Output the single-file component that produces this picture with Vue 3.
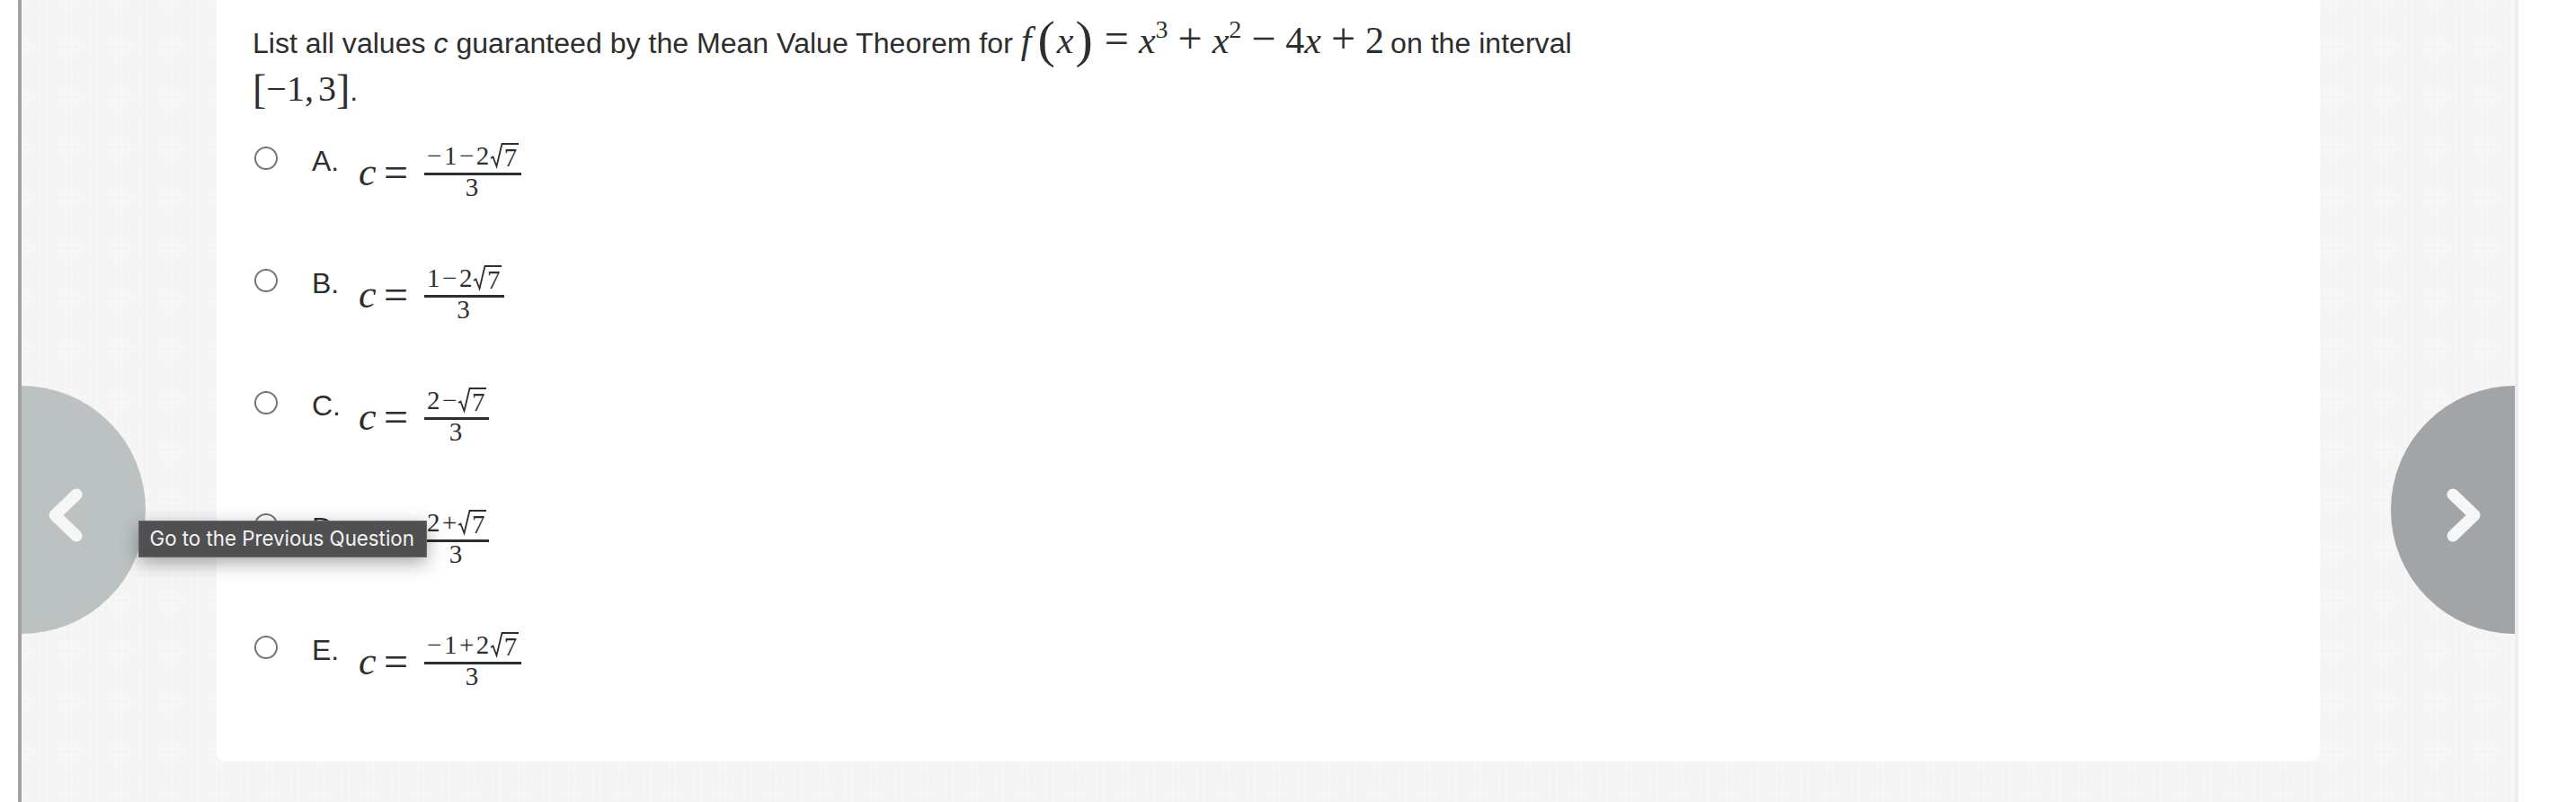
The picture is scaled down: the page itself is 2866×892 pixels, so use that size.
<script setup>
const options = [
  { letter: 'A', num: '−1−2' },
  { letter: 'B', num: '1−2' },
  { letter: 'C', num: '2−' },
  { letter: 'D', num: '2+' },
  { letter: 'E', num: '−1+2' },
];
</script>

<template>
  <div class="page">
    <div class="panel">
      <button class="nav nav-prev" aria-label="Previous">
        <svg class="chevron" viewBox="0 0 44 62"><polyline points="33,8 9,31 33,54" /></svg>
      </button>
      <div class="tooltip">Go to the Previous Question</div>

      <div class="card">
        <div class="question">
          <div class="line-one">
            <span>List all values <i>c</i> guaranteed by the Mean Value Theorem for</span>
            <span class="math eq">
              <i class="fn">f</i><span class="paren">(</span><i>x</i><span class="paren">)</span>
              <span class="op">=</span>
              <i>x</i><sup>3</sup>
              <span class="op">+</span>
              <i>x</i><sup>2</sup>
              <span class="op">−</span>
              <span>4</span><i>x</i>
              <span class="op">+</span>
              <span>2</span>
            </span>
            <span>on the interval</span>
          </div>
          <div class="line-two"><span class="math interval"><span class="bracket">[</span>−1,<span class="comma-gap">3</span><span class="bracket">]</span></span><span class="dot">.</span></div>
        </div>

        <div class="options">
          <div v-for="opt in options" :key="opt.letter" class="option">
            <span class="radio"></span>
            <span class="letter">{{ opt.letter }}.</span>
            <div class="math answer">
              <i class="var">c</i>
              <span class="equals">=</span>
              <div class="frac">
                <div class="num">
                  <span>{{ opt.num }}</span>
                  <svg class="radical" viewBox="0 0 14 28"><path d="M1 17 L3.5 15.5 L7.5 26 L13.5 1 H14" /></svg>
                  <span class="radicand">7</span>
                </div>
                <div class="den">3</div>
              </div>
            </div>
          </div>
        </div>
      </div>

      <button class="nav nav-next" aria-label="Next">
        <svg class="chevron" viewBox="0 0 44 62"><polyline points="11,8 35,31 11,54" /></svg>
      </button>
    </div>
  </div>
</template>

<style scoped>
.page {
  width: 2866px;
  height: 892px;
  overflow: hidden;
  background: #fff;
  padding-left: 20px;
  box-sizing: border-box;
  font-family: "Liberation Sans", Arial, sans-serif;
  color: #2e2e2e;
}

.panel {
  position: relative;
  width: 2782px;
  height: 892px;
  box-sizing: border-box;
  padding: 0 217px;
  border-left: 4px solid #a2a2a2;
  border-right: 4px solid #eeeeee;
  background-color: #f5f5f5;
  background-image:
    radial-gradient(circle, rgba(0, 0, 0, 0.008) 1px, transparent 2px),
    radial-gradient(circle, rgba(255, 255, 255, 0.25) 1px, transparent 2px);
  background-size: 7px 7px;
  background-position: 0 0, 3px 3px;
}

.card {
  height: 846px;
  background: #fff;
  border-radius: 0 0 8px 8px;
  padding: 18px 0 0 40px;
  box-sizing: border-box;
}

.question {
  font-size: 32.1px;
  height: 122px;
}

.line-one {
  display: flex;
  align-items: baseline;
  height: 54px;
  line-height: 54px;
  white-space: nowrap;
}

.line-two {
  height: 54px;
  line-height: 54px;
  white-space: nowrap;
}

.math {
  font-family: "Liberation Serif", "Times New Roman", serif;
}

.eq {
  font-size: 42px;
  margin: 0 7px 0 9px;
}

.eq sup {
  font-size: 28px;
  line-height: 0;
  vertical-align: 17px;
}

.fn {
  margin-right: 5px;
}

.paren {
  margin: 0 2px;
  font-size: 58px;
  font-weight: 200;
  line-height: 0;
  vertical-align: -4px;
}

.op {
  margin: 0 11px;
  font-size: 48px;
  line-height: 0;
}

.interval {
  font-size: 40px;
}

.bracket {
  font-size: 46px;
  line-height: 0;
  vertical-align: -3px;
}

.comma-gap {
  margin-left: 5px;
}

.dot {
  font-size: 32px;
}

.options {
  display: flex;
  flex-direction: column;
}

.option {
  display: flex;
  align-items: flex-start;
  height: 136px;
}

.radio {
  width: 26px;
  height: 26px;
  margin-top: 23px;
  margin-left: 2px;
  box-sizing: border-box;
  border: 2px solid #767676;
  border-radius: 50%;
  background: #fff;
}

.letter {
  width: 52px;
  margin-left: 38px;
  margin-top: 19px;
  font-size: 32px;
  line-height: 40px;
}

.answer {
  display: flex;
  align-items: center;
  margin-top: 20px;
  font-size: 44px;
}

.var {
  width: 28px;
  margin-top: 2px;
}

.equals {
  margin-top: 2px;
  margin-right: 18px;
  font-size: 48px;
  line-height: 44px;
}

.frac {
  display: flex;
  flex-direction: column;
  align-items: center;
  font-size: 29px;
  letter-spacing: 2.5px;
}

.num {
  display: flex;
  align-items: flex-end;
  height: 35px;
  padding: 0 3px 5px;
  border-bottom: 3px solid #2e2e2e;
  line-height: 28px;
  box-sizing: border-box;
}

.radical {
  width: 14px;
  height: 28px;
  margin-left: -2px;
  overflow: visible;
  fill: none;
  stroke: #2e2e2e;
  stroke-width: 1.8;
}

.radicand {
  height: 28px;
  line-height: 29px;
  border-top: 2px solid #2e2e2e;
  box-sizing: border-box;
  letter-spacing: 0;
  padding: 0 2px;
}

.den {
  line-height: 26px;
}

.nav {
  position: absolute;
  top: 429px;
  width: 138px;
  height: 276px;
  padding: 0;
  border: none;
  display: flex;
  align-items: center;
}

.nav-prev {
  left: 0;
  background: rgba(150, 160, 160, 0.6);
  border-radius: 0 138px 138px 0;
  padding-left: 28px;
}

.nav-next {
  right: 0;
  background: rgba(130, 135, 137, 0.72);
  border-radius: 138px 0 0 138px;
  padding-left: 58px;
}

.chevron {
  width: 44px;
  height: 62px;
  margin-top: 11px;
  fill: none;
  stroke: #f6f6f6;
  stroke-width: 13;
  stroke-linecap: round;
  stroke-linejoin: round;
}

.tooltip {
  position: absolute;
  left: 130px;
  top: 579px;
  z-index: 2;
  height: 41px;
  padding: 0 13px 0 11.5px;
  box-sizing: border-box;
  background: #505052;
  border: 1px solid #6a6a6c;
  box-shadow: 0 6px 20px rgba(0, 0, 0, 0.35);
  color: #f2f2f2;
  font-family: Inter, "Noto Sans", sans-serif;
  font-size: 22.3px;
  line-height: 37px;
  white-space: nowrap;
}
</style>
